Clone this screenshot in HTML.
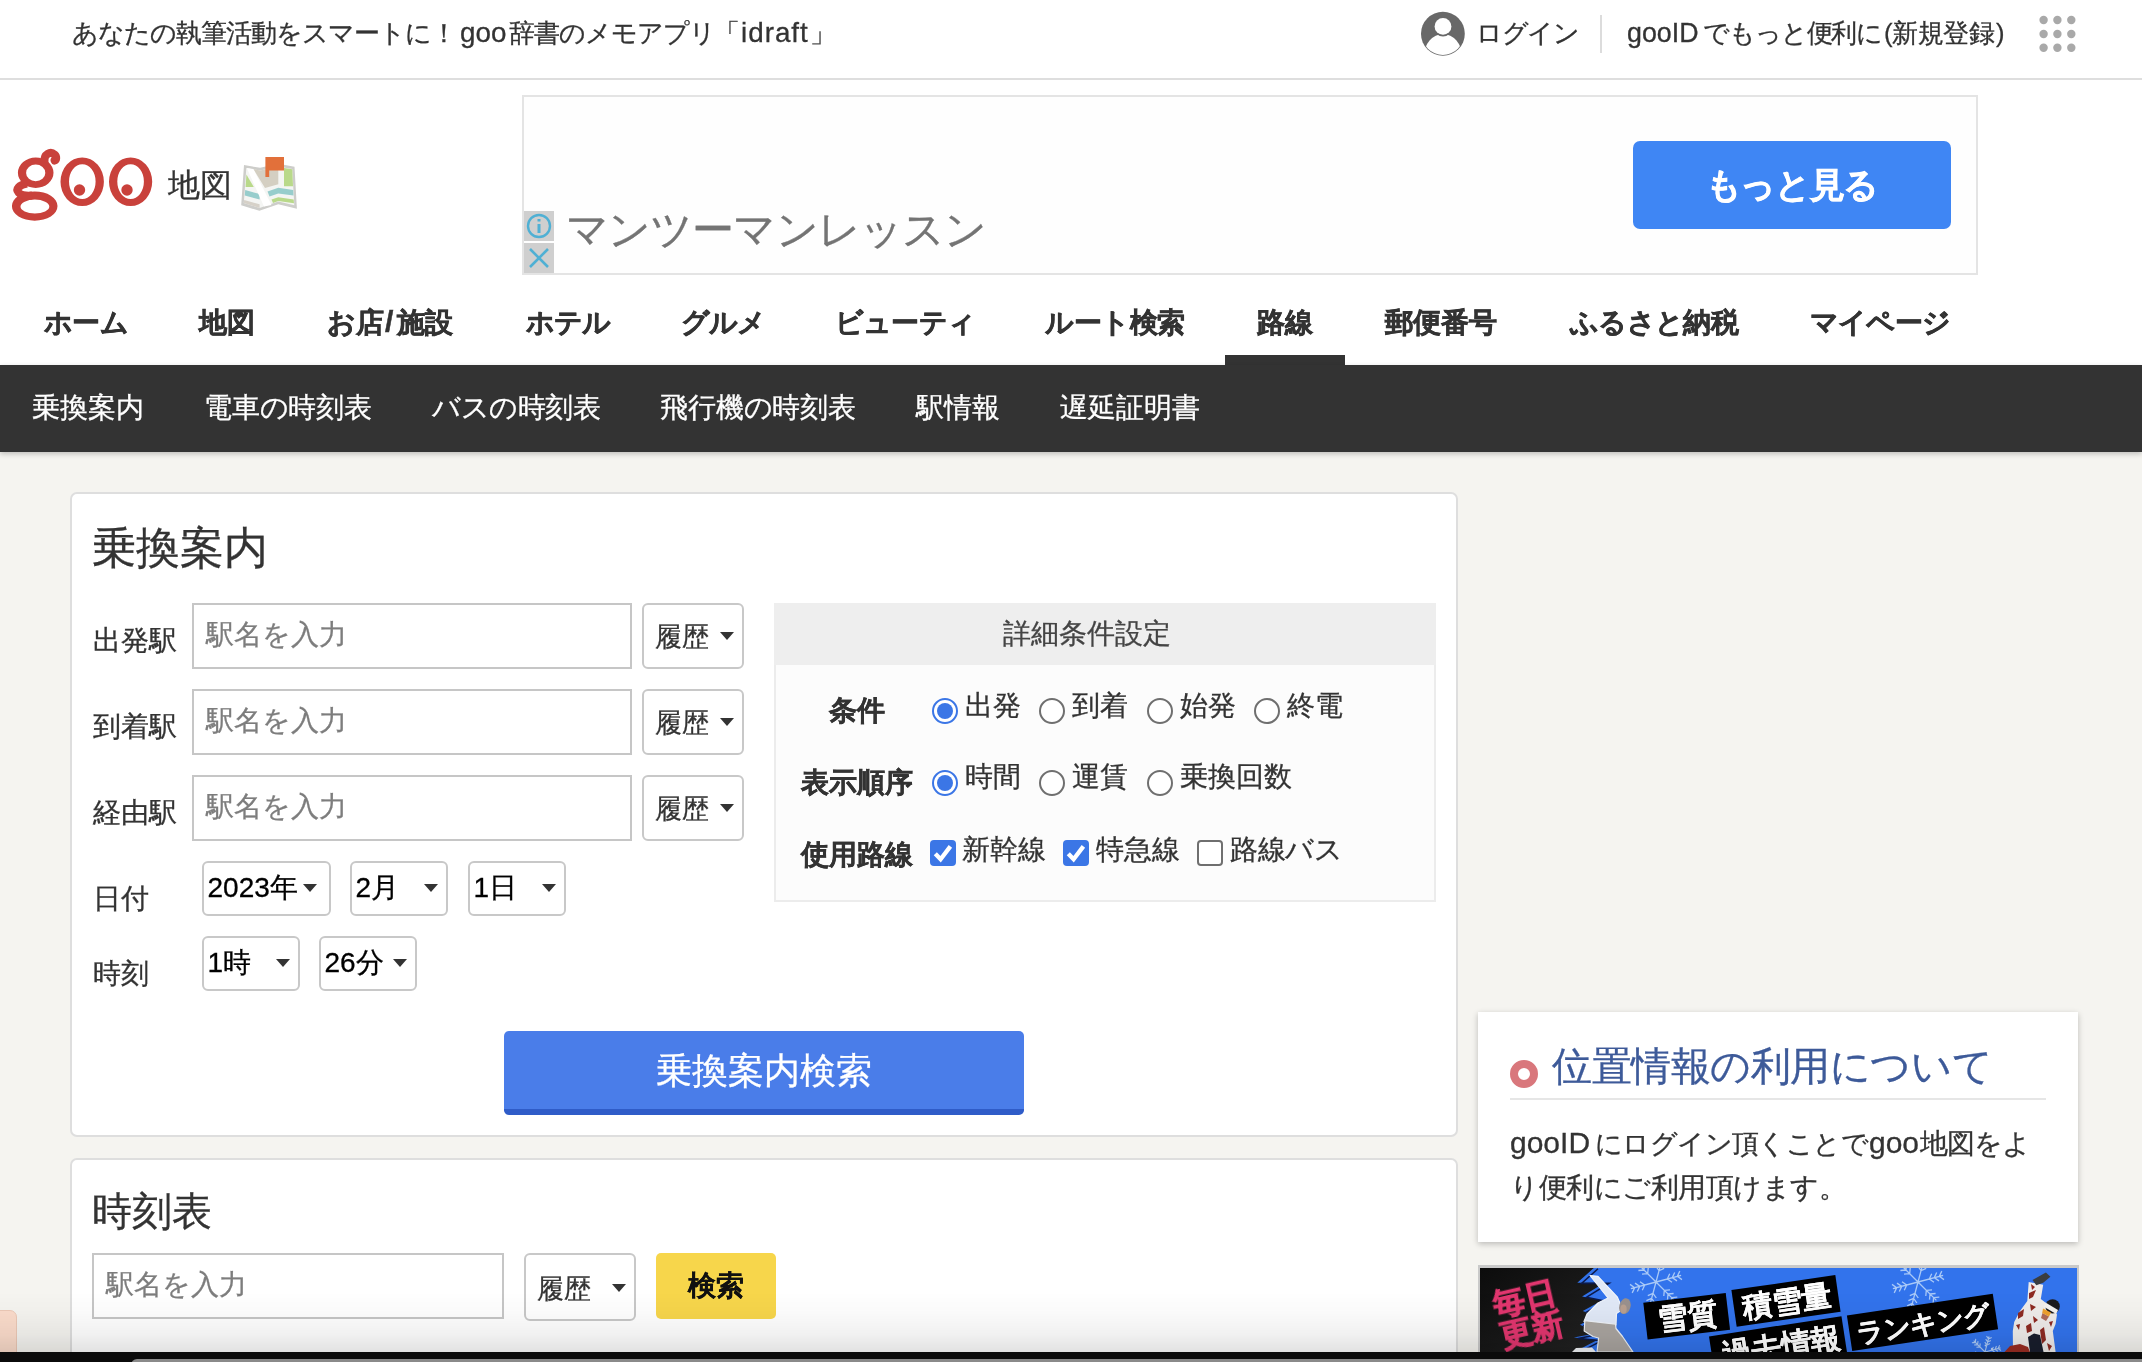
<!DOCTYPE html>
<html lang="ja">
<head>
<meta charset="utf-8">
<title>goo地図 乗換案内</title>
<style>
*{box-sizing:border-box;margin:0;padding:0}
html,body{width:2142px;height:1362px;overflow:hidden;background:#f5f4f0;font-family:"Liberation Sans",sans-serif;color:#333;-webkit-text-stroke-width:0.3px}
.t{position:absolute;white-space:nowrap;line-height:1}
.b{position:absolute}
#topbar{position:absolute;left:0;top:0;width:2142px;height:80px;background:#fff;border-bottom:2px solid #dedede}
#header{position:absolute;left:0;top:80px;width:2142px;height:285px;background:#fff}
#subnav{position:absolute;left:0;top:365px;width:2142px;height:87px;background:#333;box-shadow:0 2px 5px rgba(0,0,0,.22)}
.top{font-size:25.6px;color:#333;top:20.5px}
.nav{-webkit-text-stroke-width:0.5px;font-weight:bold;font-size:28px;color:#333;top:309px}
.sub{font-size:28px;color:#fff;top:394px}
.card{position:absolute;background:#fff;border:2px solid #dedede;border-radius:7px}
.lbl{font-size:28px;color:#333}
.inp{position:absolute;background:#fff;border:2px solid #c6c6c6;height:66px}
.inp span{position:absolute;left:12px;top:16px;font-size:28px;line-height:1;color:#7d7d7d;white-space:nowrap}
.sel{position:absolute;background:#fff;border:2px solid #c8c8c8;border-radius:6px}
.sel span{position:absolute;font-size:28px;line-height:1;color:#000;white-space:nowrap}
.sel i{position:absolute;width:0;height:0;border-left:7.5px solid transparent;border-right:7.5px solid transparent;border-top:8.5px solid #333}
.rad{position:absolute;width:26px;height:26px;border-radius:50%;border:2px solid #6f6f6f;background:#fff}
.rad.on{border:2.5px solid #3b76e6}
.rad.on:after{content:"";position:absolute;left:2.5px;top:2.5px;width:16px;height:16px;border-radius:50%;background:#3b76e6}
.chk{position:absolute;width:26px;height:26px;border-radius:4px;border:2px solid #6f6f6f;background:#fff}
.chk.on{border:none;background:#3b76e6}
.bl{-webkit-text-stroke-width:0.35px;font-weight:bold;font-size:28px;color:#333}
.ol{font-size:28px;color:#333}
</style>
</head>
<body>
<div id="root" style="position:absolute;left:0;top:0;width:2142px;height:1362px;will-change:transform">
<!-- top bar -->
<div id="topbar">
  <div class="t top" style="letter-spacing:-1.00px;left:72px">あなたの執筆活動をスマートに！</div><div class="t" style="left:460px;top:19px;font-size:27.8px">goo</div><div class="t top" style="letter-spacing:-1.07px;left:509px">辞書のメモアプリ「</div><div class="t" style="left:741px;top:19px;font-size:27.8px;letter-spacing:1px">idraft</div><div class="t top" style="left:810px">」</div>
  <svg class="b" style="left:1421px;top:11px" width="45" height="46" viewBox="0 0 45 46"><defs><clipPath id="cp"><circle cx="21.9" cy="22.75" r="21.2"/></clipPath></defs><circle cx="21.9" cy="22.75" r="21.9" fill="#686868"/><g clip-path="url(#cp)"><ellipse cx="22" cy="45" rx="19" ry="22" fill="#fff"/><circle cx="22" cy="15.5" r="9.9" fill="#686868"/><circle cx="22" cy="15.4" r="8.4" fill="#fff"/></g></svg>
  <div class="t top" style="letter-spacing:-1.40px;left:1476px">ログイン</div>
  <div class="b" style="left:1600px;top:15px;width:2px;height:38px;background:#dcdcdc"></div>
  <div class="t" style="left:1627px;top:20px;font-size:26.8px">gooID</div><div class="t top" style="letter-spacing:-1.11px;left:1703px">でもっと便利に</div><div class="t top" style="left:1884px">(</div><div class="t top" style="letter-spacing:-0.40px;left:1892px">新規登録</div><div class="t top" style="left:1996px">)</div>
  <svg class="b" style="left:2038px;top:14px" width="40" height="40" viewBox="0 0 40 40" fill="#a9a9a9"><circle cx="5.6" cy="6" r="4.2"/><circle cx="19.4" cy="6" r="4.2"/><circle cx="33.3" cy="6" r="4.2"/><circle cx="5.6" cy="20" r="4.2"/><circle cx="19.4" cy="20" r="4.2"/><circle cx="33.3" cy="20" r="4.2"/><circle cx="5.6" cy="33.8" r="4.2"/><circle cx="19.4" cy="33.8" r="4.2"/><circle cx="33.3" cy="33.8" r="4.2"/></svg>
</div>

<!-- header -->
<div id="header"></div>
<!-- goo logo -->
<svg class="b" style="left:8px;top:145px" width="150" height="82" viewBox="8 145 150 82">
  <g fill="#c9413b" fill-rule="evenodd">
    <path d="M60.5 181.8 a21.7 24.3 0 1 0 43.4 0 a21.7 24.3 0 1 0 -43.4 0 Z M69 181.6 a13.3 17.4 0 1 1 26.6 0 a13.3 17.4 0 1 1 -26.6 0 Z"/>
    <path d="M109 181.8 a21.6 24.3 0 1 0 43.2 0 a21.6 24.3 0 1 0 -43.2 0 Z M117.3 181.6 a13.3 17.4 0 1 1 26.6 0 a13.3 17.4 0 1 1 -26.6 0 Z"/>
    <circle cx="79.5" cy="190" r="5.7"/>
    <circle cx="127" cy="190" r="5.7"/>
    <path d="M17.9 172.7 a17.8 15.2 0 1 0 35.6 0 a17.8 15.2 0 1 0 -35.6 0 Z M26.1 172.9 a9.6 8.3 0 1 1 19.2 0 a9.6 8.3 0 1 1 -19.2 0 Z"/>
    <path d="M11.9 206.1 a22.8 14.6 0 1 0 45.6 0 a22.8 14.6 0 1 0 -45.6 0 Z M20.5 206.6 a14.4 7 0 1 1 28.8 0 a14.4 7 0 1 1 -28.8 0 Z"/>
  </g>
  <g fill="none" stroke="#c9413b" stroke-width="8" stroke-linecap="round">
    <path d="M44.5 162 C43.5 154 50.5 151 54.5 154.5 C57.2 157 56.2 160 54.6 160.6"/>
    <path d="M27 183.5 C19 185 15.5 189 18.5 192.5 C20.5 195 26 196 32 195.6" stroke-linecap="butt"/>
  </g>
</svg>
<div class="t" style="letter-spacing:0.00px;left:168px;top:169px;font-size:32px;color:#333">地図</div>
<!-- map icon -->
<svg class="b" style="left:240px;top:155px" width="60" height="58" viewBox="240 155 60 58">
  <path d="M244 165 L260.1 167.8 L278.3 163.8 L294.5 166.7 L296.9 208.7 L278.3 204.2 L259.4 210.8 L241.2 205.2 Z" fill="#cdcdca"/>
  <path d="M246.3 168 L260.1 170.5 L278.3 166.5 L292.3 169 L294.3 205.3 L278.3 201.5 L259.6 208 L243.8 203 Z" fill="#f4f5f3"/>
  <path d="M246.4 174.4 L253.8 187 L245.6 187 Z" fill="#b9d98a"/>
  <path d="M284 168 L292.3 169.2 L293 186.3 L284 186.3 Z" fill="#b9d98a"/>
  <path d="M253.3 168.9 L260.1 170.5 L278.3 166.5 L278.3 184.2 L265 188 Z" fill="#d4cfc2"/>
  <path d="M245.2 190 L259.6 194 L259.6 199.5 L244.8 195.4 Z" fill="#97cdcc"/>
  <path d="M267.5 191.5 L278.3 187.8 L293.2 190 L293.5 195.6 L278.3 193.4 L269.5 196.5 Z" fill="#97cdcc"/>
  <path d="M271.5 199.5 L278.3 197.2 L293.7 199.6 L294 203.2 L278.3 201 L273 203 Z" fill="#b9d98a"/>
  <path d="M244.2 200 L259.6 204.3 L259.6 208 L243.8 203 Z" fill="#d6d1c8"/>
  <path d="M246.8 168.1 L253.3 169 L271.5 205 L264 206.5 Z" fill="#fff"/>
  <path d="M265.4 156.9 H284 V170.6 H269.2 V176.9 H265.4 Z" fill="#e2703a"/>
</svg>

<!-- ad -->
<div class="b" style="left:522px;top:95px;width:1456px;height:180px;border:2px solid #e4e4e4;background:#fefefe"></div>
<div class="b" style="left:524px;top:211px;width:30px;height:30px;background:#cfcfcf"></div>
<div class="b" style="left:524px;top:243px;width:30px;height:30px;background:#cfcfcf"></div>
<svg class="b" style="left:524px;top:211px" width="30" height="62" viewBox="0 0 30 62" fill="none" stroke="#4fb0d4" stroke-width="2.4"><circle cx="15" cy="15" r="11"/><path d="M15 13 V22 M15 8 V10.5" stroke-width="3"/><path d="M6 38 L24 56 M24 38 L6 56" stroke-width="2.6"/></svg>
<div class="t" style="letter-spacing:-0.90px;left:566px;top:209px;font-size:42px;color:#747474">マンツーマンレッスン</div>
<div class="b" style="left:1633px;top:141px;width:318px;height:88px;border-radius:7px;background:#3f86f4"></div>
<div class="t" style="letter-spacing:-1.30px;left:1705.7px;top:168px;font-size:34.5px;font-weight:bold;-webkit-text-stroke-width:0.6px;color:#fff">もっと見る</div>

<!-- nav -->
<div class="t nav" style="letter-spacing:-0.67px;left:44px">ホーム</div>
<div class="t nav" style="letter-spacing:0.00px;left:199px">地図</div>
<div class="t nav" style="letter-spacing:-0.50px;left:327px">お店</div><div class="t nav" style="left:385px;font-size:30px;top:307px">/</div><div class="t nav" style="letter-spacing:0.00px;left:397px">施設</div>
<div class="t nav" style="letter-spacing:-1.00px;left:526px">ホテル</div>
<div class="t nav" style="letter-spacing:-1.00px;left:681px">グルメ</div>
<div class="t nav" style="letter-spacing:-0.80px;left:835px">ビューティ</div>
<div class="t nav" style="letter-spacing:-0.40px;left:1045px">ルート検索</div>
<div class="t nav" style="letter-spacing:0.00px;left:1257px">路線</div>
<div class="t nav" style="letter-spacing:0.00px;left:1385px">郵便番号</div>
<div class="t nav" style="letter-spacing:-0.67px;left:1570px">ふるさと納税</div>
<div class="t nav" style="letter-spacing:-0.80px;left:1810px">マイページ</div>
<div class="b" style="left:1225px;top:355px;width:120px;height:10px;background:#333"></div>

<!-- subnav -->
<div id="subnav"></div>
<div class="t sub" style="letter-spacing:0.00px;left:32px">乗換案内</div>
<div class="t sub" style="letter-spacing:-0.17px;left:204px">電車の時刻表</div>
<div class="t sub" style="letter-spacing:-0.50px;left:432px">バスの時刻表</div>
<div class="t sub" style="letter-spacing:-0.14px;left:660px">飛行機の時刻表</div>
<div class="t sub" style="letter-spacing:0.00px;left:916px">駅情報</div>
<div class="t sub" style="letter-spacing:0.00px;left:1060px">遅延証明書</div>

<!-- main card -->
<div class="card" style="left:70px;top:492px;width:1388px;height:645px"></div>
<div class="t" style="letter-spacing:0.00px;left:92px;top:526px;font-size:44px;color:#333">乗換案内</div>

<div class="t lbl" style="letter-spacing:0.00px;left:93px;top:627px">出発駅</div>
<div class="inp" style="left:192px;top:603px;width:440px"><span>駅名を入力</span></div>
<div class="sel" style="left:642px;top:603px;width:102px;height:66px"><span style="left:11px;top:18.5px;font-size:27px;color:#333">履歴</span><i style="left:76px;top:27px"></i></div>

<div class="t lbl" style="letter-spacing:0.00px;left:93px;top:713px">到着駅</div>
<div class="inp" style="left:192px;top:689px;width:440px"><span>駅名を入力</span></div>
<div class="sel" style="left:642px;top:689px;width:102px;height:66px"><span style="left:11px;top:18.5px;font-size:27px;color:#333">履歴</span><i style="left:76px;top:27px"></i></div>

<div class="t lbl" style="letter-spacing:0.00px;left:93px;top:799px">経由駅</div>
<div class="inp" style="left:192px;top:775px;width:440px"><span>駅名を入力</span></div>
<div class="sel" style="left:642px;top:775px;width:102px;height:66px"><span style="left:11px;top:18.5px;font-size:27px;color:#333">履歴</span><i style="left:76px;top:27px"></i></div>

<div class="t lbl" style="letter-spacing:0.00px;left:93px;top:885px">日付</div>
<div class="sel" style="left:202px;top:861px;width:129px;height:55px"><span style="left:3.5px;top:11px">2023年</span><i style="left:99px;top:21px"></i></div>
<div class="sel" style="left:350px;top:861px;width:98px;height:55px"><span style="left:3.5px;top:11px">2月</span><i style="left:72px;top:21px"></i></div>
<div class="sel" style="left:468px;top:861px;width:98px;height:55px"><span style="left:3.5px;top:11px">1日</span><i style="left:72px;top:21px"></i></div>

<div class="t lbl" style="letter-spacing:0.00px;left:93px;top:960px">時刻</div>
<div class="sel" style="left:202px;top:936px;width:98px;height:55px"><span style="left:3.5px;top:11px">1時</span><i style="left:72px;top:21px"></i></div>
<div class="sel" style="left:319px;top:936px;width:98px;height:55px"><span style="left:3.5px;top:11px">26分</span><i style="left:72px;top:21px"></i></div>

<div class="b" style="left:504px;top:1031px;width:520px;height:84px;border-radius:5px;background:#4a7de9;border-bottom:6px solid #2f5cc8"></div>
<div class="t" style="letter-spacing:0.00px;left:656px;top:1053px;font-size:36px;color:#fff">乗換案内検索</div>

<!-- detail panel -->
<div class="b" style="left:774px;top:603px;width:662px;height:299px;background:#fcfcfc;border:2px solid #ececec"></div>
<div class="b" style="left:774px;top:603px;width:662px;height:62px;background:#eee"></div>
<div class="t" style="letter-spacing:0.00px;left:1003px;top:620px;font-size:28px;color:#444">詳細条件設定</div>

<div class="t bl" style="letter-spacing:0.00px;left:829px;top:697px">条件</div>
<div class="rad on" style="left:932px;top:698px"></div><div class="t ol" style="letter-spacing:0.00px;left:965px;top:692px">出発</div>
<div class="rad" style="left:1039px;top:698px"></div><div class="t ol" style="letter-spacing:0.00px;left:1072px;top:692px">到着</div>
<div class="rad" style="left:1147px;top:698px"></div><div class="t ol" style="letter-spacing:0.00px;left:1180px;top:692px">始発</div>
<div class="rad" style="left:1254px;top:698px"></div><div class="t ol" style="letter-spacing:0.00px;left:1287px;top:692px">終電</div>

<div class="t bl" style="letter-spacing:0.00px;left:801px;top:769px">表示順序</div>
<div class="rad on" style="left:932px;top:770px"></div><div class="t ol" style="letter-spacing:0.00px;left:965px;top:763px">時間</div>
<div class="rad" style="left:1039px;top:770px"></div><div class="t ol" style="letter-spacing:0.00px;left:1072px;top:763px">運賃</div>
<div class="rad" style="left:1147px;top:770px"></div><div class="t ol" style="letter-spacing:0.00px;left:1180px;top:763px">乗換回数</div>

<div class="t bl" style="letter-spacing:0.00px;left:801px;top:841px">使用路線</div>
<div class="chk on" style="left:930px;top:840px"><svg width="26" height="26" viewBox="0 0 26 26" fill="none" stroke="#fff" stroke-width="4.3"><path d="M5.3 13.7 L10.6 19.2 L20.4 6.4"/></svg></div><div class="t ol" style="letter-spacing:0.00px;left:962px;top:836px">新幹線</div>
<div class="chk on" style="left:1063px;top:840px"><svg width="26" height="26" viewBox="0 0 26 26" fill="none" stroke="#fff" stroke-width="4.3"><path d="M5.3 13.7 L10.6 19.2 L20.4 6.4"/></svg></div><div class="t ol" style="letter-spacing:0.00px;left:1096px;top:836px">特急線</div>
<div class="chk" style="left:1197px;top:840px"></div><div class="t ol" style="letter-spacing:-0.50px;left:1230px;top:836px">路線バス</div>

<!-- timetable card -->
<div class="card" style="left:70px;top:1158px;width:1388px;height:260px"></div>
<div class="t" style="letter-spacing:0.00px;left:92px;top:1191px;font-size:40px;color:#333">時刻表</div>
<div class="inp" style="left:92px;top:1253px;width:412px"><span>駅名を入力</span></div>
<div class="sel" style="left:524px;top:1253px;width:112px;height:68px"><span style="left:11px;top:20.5px;font-size:27px;color:#333">履歴</span><i style="left:86px;top:29px"></i></div>
<div class="b" style="left:656px;top:1253px;width:120px;height:66px;border-radius:5px;background:#f7d64b"></div>
<div class="t" style="letter-spacing:0.00px;left:688px;top:1272px;font-size:28px;font-weight:bold;-webkit-text-stroke-width:0.15px;color:#111">検索</div>

<!-- sidebar card -->
<div class="b" style="left:1478px;top:1012px;width:600px;height:230px;background:#fff;box-shadow:0 2px 6px rgba(0,0,0,.24)"></div>
<div class="b" style="left:1510px;top:1060px;width:28px;height:28px;border-radius:50%;border:8px solid #d9777c;background:#fff"></div>
<div class="t" style="letter-spacing:-0.45px;left:1552px;top:1046px;font-size:40px;color:#3d5a99">位置情報の利用について</div>
<div class="b" style="left:1510px;top:1098px;width:536px;height:2px;background:#e6e6e6"></div>
<div class="t" style="left:1510px;top:1128px;font-size:30px;color:#333">gooID</div><div class="t" style="letter-spacing:-0.60px;left:1595px;top:1130px;font-size:27.3px;color:#333">にログイン頂くことで</div><div class="t" style="left:1869px;top:1128px;font-size:30px;color:#333">goo</div><div class="t" style="letter-spacing:-0.90px;left:1920px;top:1130px;font-size:27.6px;color:#333">地図をよ</div>
<div class="t" style="letter-spacing:-0.50px;left:1510px;top:1174px;font-size:28px;color:#333">り便利にご利用頂けます。</div>

<!-- banner -->
<svg class="b" style="left:1478px;top:1265px" width="601" height="88" viewBox="1478 1265 601 88">
  <defs><linearGradient id="bk" x1="0" y1="0" x2="1" y2="1"><stop offset="0" stop-color="#0c0c0c"/><stop offset="1" stop-color="#242424"/></linearGradient></defs>
  <rect x="1478" y="1265" width="601" height="88" fill="#c9c9c9"/>
  <rect x="1480" y="1268" width="597" height="85" fill="#3273ec"/>
  <path d="M1656.0 1282.0 L1681.1 1275.3 M1667.3 1279.0 L1672.0 1282.3 M1667.3 1279.0 L1669.7 1273.8 M1672.3 1277.6 L1677.0 1280.9 M1672.3 1277.6 L1674.7 1272.4 M1677.3 1276.3 L1682.0 1279.6 M1677.3 1276.3 L1679.8 1271.1 M1656.0 1282.0 L1674.4 1300.4 M1664.3 1290.3 L1663.8 1296.0 M1664.3 1290.3 L1670.0 1289.8 M1668.0 1294.0 L1667.5 1299.6 M1668.0 1294.0 L1673.6 1293.5 M1671.6 1297.6 L1671.1 1303.3 M1671.6 1297.6 L1677.3 1297.1 M1656.0 1282.0 L1649.3 1307.1 M1653.0 1293.3 L1647.8 1295.7 M1653.0 1293.3 L1656.3 1298.0 M1651.6 1298.3 L1646.4 1300.7 M1651.6 1298.3 L1654.9 1303.0 M1650.3 1303.3 L1645.1 1305.8 M1650.3 1303.3 L1653.6 1308.0 M1656.0 1282.0 L1630.9 1288.7 M1644.7 1285.0 L1640.0 1281.7 M1644.7 1285.0 L1642.3 1290.2 M1639.7 1286.4 L1635.0 1283.1 M1639.7 1286.4 L1637.3 1291.6 M1634.7 1287.7 L1630.0 1284.4 M1634.7 1287.7 L1632.2 1292.9 M1656.0 1282.0 L1637.6 1263.6 M1647.7 1273.7 L1648.2 1268.0 M1647.7 1273.7 L1642.0 1274.2 M1644.0 1270.0 L1644.5 1264.4 M1644.0 1270.0 L1638.4 1270.5 M1640.4 1266.4 L1640.9 1260.7 M1640.4 1266.4 L1634.7 1266.9 M1656.0 1282.0 L1662.7 1256.9 M1659.0 1270.7 L1664.2 1268.3 M1659.0 1270.7 L1655.7 1266.0 M1660.4 1265.7 L1665.6 1263.3 M1660.4 1265.7 L1657.1 1261.0 M1661.7 1260.7 L1666.9 1258.2 M1661.7 1260.7 L1658.4 1256.0" stroke="#a9c9f7" stroke-width="1.3" fill="none"/>
  <path d="M1918.0 1282.0 L1943.1 1275.3 M1929.3 1279.0 L1934.0 1282.3 M1929.3 1279.0 L1931.7 1273.8 M1934.3 1277.6 L1939.0 1280.9 M1934.3 1277.6 L1936.7 1272.4 M1939.3 1276.3 L1944.0 1279.6 M1939.3 1276.3 L1941.8 1271.1 M1918.0 1282.0 L1936.4 1300.4 M1926.3 1290.3 L1925.8 1296.0 M1926.3 1290.3 L1932.0 1289.8 M1930.0 1294.0 L1929.5 1299.6 M1930.0 1294.0 L1935.6 1293.5 M1933.6 1297.6 L1933.1 1303.3 M1933.6 1297.6 L1939.3 1297.1 M1918.0 1282.0 L1911.3 1307.1 M1915.0 1293.3 L1909.8 1295.7 M1915.0 1293.3 L1918.3 1298.0 M1913.6 1298.3 L1908.4 1300.7 M1913.6 1298.3 L1916.9 1303.0 M1912.3 1303.3 L1907.1 1305.8 M1912.3 1303.3 L1915.6 1308.0 M1918.0 1282.0 L1892.9 1288.7 M1906.7 1285.0 L1902.0 1281.7 M1906.7 1285.0 L1904.3 1290.2 M1901.7 1286.4 L1897.0 1283.1 M1901.7 1286.4 L1899.3 1291.6 M1896.7 1287.7 L1892.0 1284.4 M1896.7 1287.7 L1894.2 1292.9 M1918.0 1282.0 L1899.6 1263.6 M1909.7 1273.7 L1910.2 1268.0 M1909.7 1273.7 L1904.0 1274.2 M1906.0 1270.0 L1906.5 1264.4 M1906.0 1270.0 L1900.4 1270.5 M1902.4 1266.4 L1902.9 1260.7 M1902.4 1266.4 L1896.7 1266.9 M1918.0 1282.0 L1924.7 1256.9 M1921.0 1270.7 L1926.2 1268.3 M1921.0 1270.7 L1917.7 1266.0 M1922.4 1265.7 L1927.6 1263.3 M1922.4 1265.7 L1919.1 1261.0 M1923.7 1260.7 L1928.9 1258.2 M1923.7 1260.7 L1920.4 1256.0" stroke="#a9c9f7" stroke-width="1.3" fill="none"/>
  <path d="M1985.0 1352.0 L2000.5 1347.9 M1992.0 1350.1 L1994.8 1352.2 M1992.0 1350.1 L1993.4 1346.9 M1995.0 1349.3 L1997.9 1351.3 M1995.0 1349.3 L1996.5 1346.1 M1998.1 1348.5 L2001.0 1350.5 M1998.1 1348.5 L1999.6 1345.3 M1985.0 1352.0 L1996.3 1363.3 M1990.1 1357.1 L1989.8 1360.6 M1990.1 1357.1 L1993.6 1356.8 M1992.4 1359.4 L1992.0 1362.9 M1992.4 1359.4 L1995.9 1359.0 M1994.6 1361.6 L1994.3 1365.1 M1994.6 1361.6 L1998.1 1361.3 M1985.0 1352.0 L1980.9 1367.5 M1983.1 1359.0 L1979.9 1360.4 M1983.1 1359.0 L1985.2 1361.8 M1982.3 1362.0 L1979.1 1363.5 M1982.3 1362.0 L1984.3 1364.9 M1981.5 1365.1 L1978.3 1366.6 M1981.5 1365.1 L1983.5 1368.0 M1985.0 1352.0 L1969.5 1356.1 M1978.0 1353.9 L1975.2 1351.8 M1978.0 1353.9 L1976.6 1357.1 M1975.0 1354.7 L1972.1 1352.7 M1975.0 1354.7 L1973.5 1357.9 M1971.9 1355.5 L1969.0 1353.5 M1971.9 1355.5 L1970.4 1358.7 M1985.0 1352.0 L1973.7 1340.7 M1979.9 1346.9 L1980.2 1343.4 M1979.9 1346.9 L1976.4 1347.2 M1977.6 1344.6 L1978.0 1341.1 M1977.6 1344.6 L1974.1 1345.0 M1975.4 1342.4 L1975.7 1338.9 M1975.4 1342.4 L1971.9 1342.7 M1985.0 1352.0 L1989.1 1336.5 M1986.9 1345.0 L1990.1 1343.6 M1986.9 1345.0 L1984.8 1342.2 M1987.7 1342.0 L1990.9 1340.5 M1987.7 1342.0 L1985.7 1339.1 M1988.5 1338.9 L1991.7 1337.4 M1988.5 1338.9 L1986.5 1336.0" stroke="#a9c9f7" stroke-width="1.1" fill="none"/>
  <rect x="1478" y="1265" width="601" height="3" fill="#c9c9c9"/>
  <path d="M1480 1268 H1593.8 L1577.3 1282.7 L1604.9 1282.4 L1582.1 1296.5 L1602 1300.5 L1582.8 1311 L1596 1316 L1580 1324.8 L1598 1333 L1573.8 1337.6 L1597.3 1340 L1582 1348 L1590 1353 H1480 Z" fill="url(#bk)"/>
  <path d="M1593.8 1268 L1577.3 1282.7 L1604.9 1282.4 L1582.1 1296.5 L1602 1300.5 L1582.8 1311 L1596 1316 L1580 1324.8 L1598 1333 L1573.8 1337.6 L1597.3 1340 L1582 1348 L1590 1353" fill="none" stroke="#0c1a4a" stroke-width="1.5" transform="translate(4.2,0.8)"/>
  <!-- boarder 1 -->
  <path d="M1590 1275.5 L1598 1276.3 L1617.2 1296.8 L1619.5 1302 L1620.8 1310.5 L1616.5 1313.5 L1616 1325 L1584 1321.5 L1587 1314 L1598 1303 L1608 1298 Z" fill="#e1e9f7" stroke="#f2f6fc" stroke-width="1.2" stroke-linejoin="round"/>
  <ellipse cx="1624.9" cy="1306.2" rx="5.6" ry="8" fill="#9a918e" transform="rotate(15 1624.9 1306.2)"/>
  <ellipse cx="1623.5" cy="1309" rx="3.2" ry="4.5" fill="#b9a090"/>
  <path d="M1584.8 1320.7 L1615.5 1324.1 L1616 1328.5 L1622.5 1336.5 L1633 1352 L1597 1352 L1598.6 1338 L1593 1336.5 L1584.2 1331 Z" fill="#aaa5a0" stroke="#eef2f8" stroke-width="1.2" stroke-linejoin="round"/>
  <path d="M1572 1352 L1576 1348 L1592 1347.5 L1596 1352 Z" fill="#f2f4f8"/>
  <!-- labels -->
  <g font-family="Liberation Sans, sans-serif" font-weight="bold" fill="#fff" stroke="#fff" stroke-width="0.2">
    <g transform="rotate(-6.7 1643.3 1302.8)"><rect x="1643.3" y="1302.8" width="83" height="37" fill="#000" stroke="none"/><text x="1656" y="1332" font-size="30" textLength="60" lengthAdjust="spacing">雪質</text></g>
    <g transform="rotate(-8.2 1731.4 1290.1)"><rect x="1731.4" y="1290.1" width="105" height="37" fill="#000" stroke="none"/><text x="1740" y="1319.5" font-size="30" textLength="90" lengthAdjust="spacing">積雪量</text></g>
    <g transform="rotate(-8.7 1709 1336.4)"><rect x="1709" y="1336.4" width="134" height="40" fill="#000" stroke="none"/><text x="1719" y="1367" font-size="30" textLength="120" lengthAdjust="spacing">過去情報</text></g>
    <g transform="rotate(-8.5 1846.9 1315.5)"><rect x="1846.9" y="1315.5" width="147.5" height="36" fill="#000" stroke="none"/><text x="1854" y="1344" font-size="27" textLength="135" lengthAdjust="spacing">ランキング</text></g>
  </g>
  <g font-family="Liberation Sans, sans-serif" font-weight="bold" fill="#e2366f" stroke="#e2366f" stroke-width="0.9" font-size="32" transform="rotate(-13 1528.4 1313)">
    <text x="1496.4" y="1308.5" textLength="64" lengthAdjust="spacing">毎日</text><text x="1496.4" y="1340.5" textLength="64" lengthAdjust="spacing">更新</text>
  </g>
  <!-- boarder 2 -->
  <path d="M2028.7 1282 L2043.2 1284.8 L2040.8 1299 L2046 1303 L2057 1314.5 L2055.6 1324.1 L2052.8 1331 L2055.6 1352 L2013 1352 L2012.8 1331 L2014.2 1322 L2020 1311 L2027.3 1301 Z" fill="#efecea"/>
  <path d="M2045.9 1272.4 L2050.4 1276.8 L2043.2 1282.7 L2036.3 1285.3 L2032.5 1280 Z" fill="#3a3d40"/>
  <circle cx="2052.6" cy="1306.4" r="7.2" fill="#1b1a1d"/>
  <path d="M2045.5 1302.5 L2058 1310 L2056.2 1314 L2043.8 1306.8 Z" fill="#f4f2f0"/>
  <path d="M2042.5 1313 L2049 1316.5 L2046 1321 L2041 1318 Z" fill="#b06a58"/>
  <path d="M2043 1308.5 L2051 1312.5 L2049 1316.5 L2042.2 1313 Z" fill="#eea02c"/>
  <path d="M2031 1284 L2035 1287 L2032 1290 Z M2029 1293 L2036 1290 L2033 1297 L2029 1299 Z M2018 1313 L2024 1309 L2023 1316 L2018 1319 Z M2030 1304 L2036 1307 L2031 1311 Z M2033 1316 L2038 1320 L2034 1323 Z M2026 1326 L2031 1323 L2032 1331 L2027 1333 Z M2040 1330 L2044 1327 L2046 1340 L2042 1344 Z M2049 1322 L2053 1321 L2051 1327 Z M2016 1325 L2020 1324 L2019 1330 Z M2047 1343 L2052 1346 L2049 1351 Z" fill="#8e2a22"/>
  <path d="M2028 1337 L2034 1333.5 L2040 1335 L2043.5 1352 L2030 1352 Z" fill="#191e2d"/>
  <path d="M2004.5 1352 L2010 1346 L2020 1344 L2028 1347 L2030 1352 Z" fill="#9b2c22"/>
  <circle cx="1992" cy="1349" r="1.2" fill="#bcd4fa"/><circle cx="1985.5" cy="1345.5" r="0.9" fill="#bcd4fa"/>
</svg>

<!-- left tab -->
<div class="b" style="left:-2px;top:1310px;width:19px;height:50px;background:#fbdccb;border:1px solid #ecc9b6;border-top-right-radius:7px"></div>

<!-- bottom bar -->
<div class="b" style="left:0;top:1292px;width:2142px;height:60px;background:linear-gradient(to bottom,rgba(0,0,0,0),rgba(0,0,0,.02) 35%,rgba(0,0,0,.055) 70%,rgba(0,0,0,.115))"></div>
<div class="b" style="left:0;top:1351.5px;width:2142px;height:11px;background:#0b0b0b"></div><div class="b" style="left:131px;top:1359px;width:2011px;height:6px;background:#8a8a8a;border-top-left-radius:6px"></div>
</div>
</body>
</html>
